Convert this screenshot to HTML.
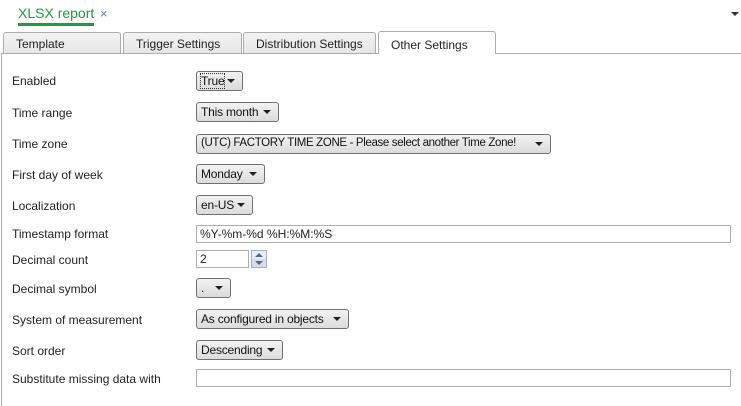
<!DOCTYPE html>
<html><head><style>
body{margin:0;width:741px;height:406px;background:#fff;font-family:"Liberation Sans",sans-serif;font-size:12px;color:#222;position:relative;overflow:hidden}
.a{position:absolute;white-space:nowrap}
.tab{position:absolute;top:32px;height:21px;border:1px solid #acacac;border-bottom:none;border-radius:3px 3px 0 0;background:linear-gradient(#f3f3f3,#e6e6e6);box-sizing:border-box;padding:4px 0 0 12px;font-size:12px;white-space:nowrap}
.lbl{position:absolute;left:12px}
.dd{position:absolute;left:196px;height:20px;border:1px solid #707070;border-radius:3px;background:linear-gradient(#f2f2f2,#dcdcdc);box-sizing:border-box;padding:2px 0 0 4px;font-size:12px;color:#111;white-space:nowrap;overflow:hidden;letter-spacing:-0.2px}
.dd::after{content:"";position:absolute;right:7px;top:7px;border-left:4px solid transparent;border-right:4px solid transparent;border-top:4px solid #222}
.in{position:absolute;left:196px;height:18px;border:1px solid #abadb3;box-sizing:border-box;padding:1px 0 0 3px;font-size:12px;white-space:nowrap}
</style></head><body>
<div class="a" style="left:18px;top:5px;font-size:14px;color:#1a9e3a">XLSX report</div>
<div class="a" style="left:100px;top:6px;font-size:13px;color:#5a7d9a">×</div>
<div class="a" style="left:18px;top:23px;width:76px;height:3px;background:#1a9e3a"></div>
<div class="a" style="left:731px;top:12px;border-left:4px solid transparent;border-right:4px solid transparent;border-top:4px solid #333"></div>
<div class="a" style="left:1px;top:53px;width:740px;height:1px;background:#acacac"></div>
<div class="a" style="left:1px;top:53px;width:1px;height:353px;background:#acacac"></div>
<div class="tab" style="left:3px;width:118px">Template</div>
<div class="tab" style="left:123px;width:119px">Trigger Settings</div>
<div class="tab" style="left:243px;width:133px">Distribution Settings</div>
<div class="tab" style="left:378px;width:118px;top:31px;height:23px;background:#fff;padding-top:6px">Other Settings</div>

<div class="lbl a" style="top:74px">Enabled</div>
<div class="dd" style="top:71px;width:47px"><span style="outline:1px dotted #333">True</span></div>
<div class="lbl a" style="top:106px">Time range</div>
<div class="dd" style="top:102px;width:83px">This month</div>
<div class="lbl a" style="top:137px">Time zone</div>
<div class="dd" style="top:134px;width:355px;font-size:11.5px;letter-spacing:-0.35px">(UTC) FACTORY TIME ZONE - Please select another Time Zone!</div>
<div class="lbl a" style="top:168px">First day of week</div>
<div class="dd" style="top:164px;width:69px">Monday</div>
<div class="lbl a" style="top:199px">Localization</div>
<div class="dd" style="top:195px;width:57px">en-US</div>
<div class="lbl a" style="top:227px">Timestamp format</div>
<div class="in" style="top:225px;width:535px">%Y-%m-%d %H:%M:%S</div>
<div class="lbl a" style="top:253px">Decimal count</div>
<div class="in" style="top:250px;width:53px">2</div>
<div class="a" style="left:251px;top:250px;width:16px;height:18px;border:1px solid #9fb0c8;box-sizing:border-box;background:linear-gradient(#e8eef6 50%,#d5deea 50%)">
<div class="a" style="left:3px;top:2px;border-left:4px solid transparent;border-right:4px solid transparent;border-bottom:4px solid #4a6a90"></div>
<div class="a" style="left:3px;top:10px;border-left:4px solid transparent;border-right:4px solid transparent;border-top:4px solid #4a6a90"></div></div>
<div class="lbl a" style="top:282px">Decimal symbol</div>
<div class="dd" style="top:278px;width:35px">.</div>
<div class="lbl a" style="top:313px">System of measurement</div>
<div class="dd" style="top:309px;width:153px">As configured in objects</div>
<div class="lbl a" style="top:344px">Sort order</div>
<div class="dd" style="top:340px;width:87px">Descending</div>
<div class="lbl a" style="top:372px">Substitute missing data with</div>
<div class="in" style="top:369px;width:535px"></div>
</body></html>
